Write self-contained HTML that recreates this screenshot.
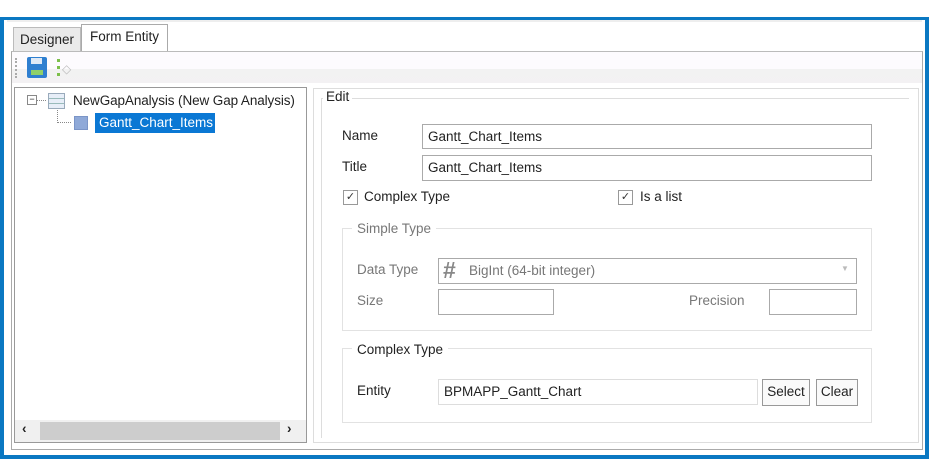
<!DOCTYPE html>
<html><head><style>
body{margin:0;width:929px;height:459px;background:#fff;position:relative;overflow:hidden;font-family:"Liberation Sans",sans-serif;font-size:13.5px;color:#222}
div{position:absolute;box-sizing:border-box}
.t{white-space:nowrap}
.in{border:1px solid #aaa;background:#fff;padding:4px 0 0 5px}
.g{color:#777}
.cb{width:15px;height:15px;border:1px solid #999;background:#fff;font-size:11px;line-height:13px;text-align:center;color:#333}
.btn{border:1px solid #999;background:#fafafa;text-align:center;line-height:23px}
</style></head><body>
<div style="left:0;top:17px;width:929px;height:442px;border:4px solid #0a78c2;border-top-width:3px;background:#fff"></div>
<div style="left:7px;top:20px;width:915px;height:2px;background:#eee"></div>
<div style="left:13px;top:27px;width:68px;height:24px;border:1px solid #bbb;border-bottom:none;background:#eaeaea;padding:4px 0 0 6px" class="t">Designer</div>
<div style="left:81px;top:24px;width:87px;height:28px;border:1px solid #aaa;border-bottom:none;background:#fff;padding:4px 0 0 8px" class="t">Form Entity</div>
<div style="left:11px;top:51px;width:912px;height:399px;border:1px solid #aaa;border-top:1px solid #bbb"></div>
<div style="left:12px;top:52px;width:910px;height:31px;background:linear-gradient(#fdfbfe 0,#fdfbfe 55%,#f2f2f2 55%,#f3f1f3 100%)"></div>
<div style="left:15px;top:58px;width:2px;height:20px;border-left:2px dotted #aaa"></div>
<div style="left:27px;top:57px;width:20px;height:21px;background:#2f7fd0;border-radius:2px"></div>
<div style="left:31px;top:58px;width:11px;height:6px;background:#dfe9f6"></div>
<div style="left:31px;top:70px;width:12px;height:5px;background:#8fd06a"></div>
<div style="left:57px;top:59px;width:3px;height:17px;border-left:3px dotted #7cbf4a"></div>
<div style="left:62px;top:62px;color:#bbb;font-size:12px" class="t">◇</div>
<div style="left:14px;top:87px;width:293px;height:356px;border:1px solid #999;background:#fff"></div>
<div style="left:27px;top:95px;width:10px;height:10px;border:1px solid #888;font-size:9px;line-height:7px;text-align:center">−</div>
<div style="left:37px;top:100px;width:9px;border-top:1px dotted #888"></div>
<div style="left:48px;top:93px;width:17px;height:16px;border:1px solid #9ab;background:repeating-linear-gradient(#e7eef8 0 4px,#9bb 4px 5px)"></div>
<div style="left:73px;top:93px;letter-spacing:-0.1px" class="t">NewGapAnalysis (New Gap Analysis)</div>
<div style="left:57px;top:110px;width:14px;height:13px;border-left:1px dotted #888;border-bottom:1px dotted #888"></div>
<div style="left:74px;top:116px;width:14px;height:14px;background:#8fa9d8;border:1px solid #7b95c7"></div>
<div style="left:95px;top:113px;width:120px;height:20px;background:#0b78d4;color:#fff;padding:2px 0 0 4px" class="t">Gantt_Chart_Items</div>
<div style="left:15px;top:420px;width:291px;height:22px;background:#f0f0f0"></div>
<div style="left:40px;top:422px;width:240px;height:18px;background:#cdcdcd"></div>
<div style="left:22px;top:421px;font-weight:bold" class="t">‹</div>
<div style="left:287px;top:421px;font-weight:bold" class="t">›</div>
<div style="left:313px;top:88px;width:606px;height:355px;border:1px solid #ddd"></div>
<div style="left:321px;top:98px;width:588px;height:2px;border-top:1px solid #ddd"></div>
<div style="left:321px;top:98px;width:1px;height:340px;border-left:1px solid #ddd"></div>
<div style="left:323px;top:89px;background:#fff;padding:0 3px" class="t">Edit</div>
<div style="left:342px;top:128px" class="t">Name</div>
<div class="in t" style="left:422px;top:124px;width:450px;height:25px">Gantt_Chart_Items</div>
<div style="left:342px;top:159px" class="t">Title</div>
<div class="in t" style="left:422px;top:155px;width:450px;height:26px">Gantt_Chart_Items</div>
<div class="cb" style="left:343px;top:190px">✓</div>
<div style="left:364px;top:189px" class="t">Complex Type</div>
<div class="cb" style="left:618px;top:190px">✓</div>
<div style="left:640px;top:189px" class="t">Is a list</div>
<div style="left:342px;top:228px;width:530px;height:103px;border:1px solid #e2e2e2"></div>
<div class="g t" style="left:352px;top:221px;background:#fff;padding:0 5px">Simple Type</div>
<div class="g t" style="left:357px;top:262px">Data Type</div>
<div class="in g t" style="left:438px;top:258px;width:419px;height:26px;padding-left:30px">BigInt (64-bit integer)</div>
<div style="left:443px;top:257px;font-size:23px;font-weight:bold;color:#888" class="t">#</div>
<div style="left:841px;top:264px;font-size:8px;color:#bbb" class="t">▼</div>
<div class="g t" style="left:357px;top:293px">Size</div>
<div class="in" style="left:438px;top:289px;width:116px;height:26px"></div>
<div class="g t" style="left:689px;top:293px">Precision</div>
<div class="in" style="left:769px;top:289px;width:88px;height:26px"></div>
<div style="left:342px;top:348px;width:530px;height:75px;border:1px solid #e2e2e2"></div>
<div class="t" style="left:352px;top:342px;background:#fff;padding:0 5px">Complex Type</div>
<div class="t" style="left:357px;top:383px">Entity</div>
<div class="in t" style="left:438px;top:379px;width:320px;height:26px;border-color:#ddd">BPMAPP_Gantt_Chart</div>
<div class="btn t" style="left:762px;top:379px;width:48px;height:27px">Select</div>
<div class="btn t" style="left:816px;top:379px;width:42px;height:27px">Clear</div>
</body></html>
